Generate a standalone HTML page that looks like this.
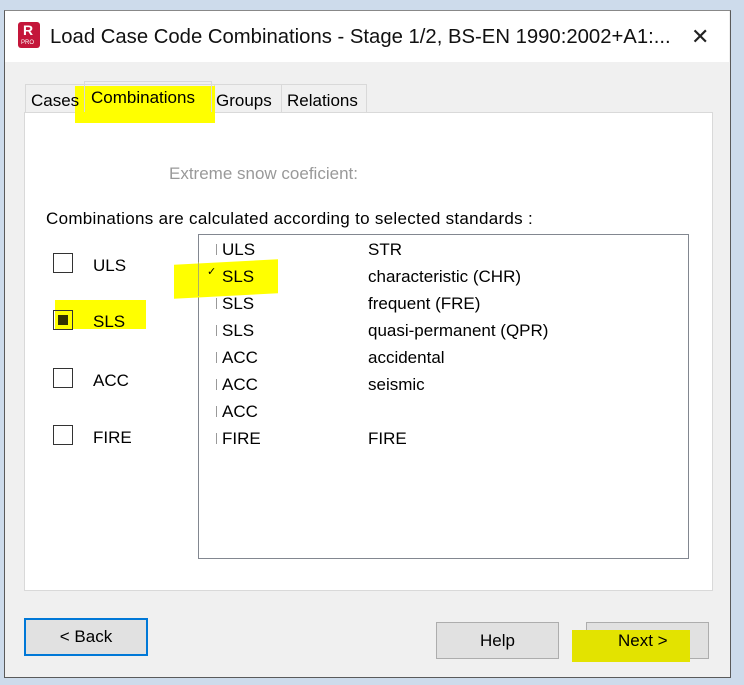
<!DOCTYPE html>
<html><head><style>
body{margin:0;width:744px;height:685px;background:#cddbeb;position:relative;overflow:hidden;font-family:"Liberation Sans",sans-serif;}
.a{position:absolute;}
.win{left:4px;top:10px;width:725px;height:666px;background:#f0f0f0;border:1px solid #5a5a5a;border-top-color:#888;}
.t{font-size:17px;color:#000;white-space:nowrap;}
.cb{width:18px;height:18px;border:1px solid #333;background:#fff;}
.btn{border:1px solid #adadad;background:#e1e1e1;font-size:17px;text-align:center;}
.tick{width:1px;height:11px;background:#999;}
</style></head><body>
<div class="a win"></div>
<div class="a" style="left:5px;top:11px;width:724px;height:51px;background:#fff"></div>
<div class="a" style="left:18px;top:22px;width:22px;height:26px;background:#c4163a;border-radius:3px"></div>
<div class="a" style="left:23px;top:22px;color:#fff;font-weight:bold;font-size:14px">R</div>
<div class="a" style="left:21px;top:40px;color:#fff;font-size:6px">PRO</div>
<div class="a t" style="left:50px;top:26px;font-size:20.3px;color:#111">Load Case Code Combinations - Stage 1/2, BS-EN 1990:2002+A1:...</div>
<div class="a" style="left:691px;top:24px;font-size:22px;color:#222">✕</div>
<!-- tabs -->
<div class="a" style="left:25px;top:84px;width:340px;height:29px;background:#f0f0f0;border:1px solid #d9d9d9;border-bottom:none"></div>
<div class="a" style="left:214px;top:84px;width:1px;height:28px;background:#d9d9d9"></div>
<div class="a" style="left:281px;top:84px;width:1px;height:28px;background:#d9d9d9"></div>
<div class="a" style="left:24px;top:112px;width:687px;height:477px;background:#fff;border:1px solid #d9d9d9"></div>
<div class="a" style="left:75px;top:86px;width:140px;height:37px;background:#ffff00"></div>
<div class="a" style="left:84px;top:81px;width:126px;height:30px;border:1px solid #d9d9d9;border-bottom:none"></div>
<div class="a t" style="left:31px;top:91px">Cases</div>
<div class="a t" style="left:91px;top:88px">Combinations</div>
<div class="a t" style="left:216px;top:91px">Groups</div>
<div class="a t" style="left:287px;top:91px">Relations</div>
<div class="a t" style="left:169px;top:164px;color:#999">Extreme snow coeficient:</div>
<div class="a t" style="left:46px;top:209px;letter-spacing:0.3px">Combinations are calculated according to selected standards :</div>
<!-- left checkboxes -->
<div class="a" style="left:55px;top:300px;width:91px;height:29px;background:#ffff00"></div>
<div class="a cb" style="left:53px;top:253px"></div><div class="a t" style="left:93px;top:256px">ULS</div>
<div class="a cb" style="left:53px;top:310px;background:transparent"></div><div class="a" style="left:58px;top:315px;width:10px;height:10px;background:#333300"></div><div class="a t" style="left:93px;top:312px">SLS</div>
<div class="a cb" style="left:53px;top:368px"></div><div class="a t" style="left:93px;top:371px">ACC</div>
<div class="a cb" style="left:53px;top:425px"></div><div class="a t" style="left:93px;top:428px">FIRE</div>
<!-- list -->
<div class="a" style="left:198px;top:234px;width:489px;height:323px;border:1px solid #828790;background:#fff"></div>
<div class="a" style="left:174px;top:262px;width:104px;height:34px;background:#ffff00;transform:skewY(-3deg)"></div>
<div class="a" style="left:198px;top:262px;width:1px;height:34px;background:#b0b060"></div>
<div class="a t" style="left:207px;top:265px;font-size:11px">✓</div>
<div class="a tick" style="left:216px;top:244px"></div><div class="a t" style="left:222px;top:240px">ULS</div><div class="a t" style="left:368px;top:240px">STR</div>
<div class="a t" style="left:222px;top:267px">SLS</div><div class="a t" style="left:368px;top:267px">characteristic (CHR)</div>
<div class="a tick" style="left:216px;top:298px"></div><div class="a t" style="left:222px;top:294px">SLS</div><div class="a t" style="left:368px;top:294px">frequent (FRE)</div>
<div class="a tick" style="left:216px;top:325px"></div><div class="a t" style="left:222px;top:321px">SLS</div><div class="a t" style="left:368px;top:321px">quasi-permanent (QPR)</div>
<div class="a tick" style="left:216px;top:352px"></div><div class="a t" style="left:222px;top:348px">ACC</div><div class="a t" style="left:368px;top:348px">accidental</div>
<div class="a tick" style="left:216px;top:379px"></div><div class="a t" style="left:222px;top:375px">ACC</div><div class="a t" style="left:368px;top:375px">seismic</div>
<div class="a tick" style="left:216px;top:406px"></div><div class="a t" style="left:222px;top:402px">ACC</div>
<div class="a tick" style="left:216px;top:433px"></div><div class="a t" style="left:222px;top:429px">FIRE</div><div class="a t" style="left:368px;top:429px">FIRE</div>
<!-- buttons -->
<div class="a btn" style="left:24px;top:618px;width:120px;height:34px;line-height:34px;border:2px solid #0078d7">&lt; Back</div>
<div class="a btn" style="left:436px;top:622px;width:121px;height:35px;line-height:36px">Help</div>
<div class="a btn" style="left:586px;top:622px;width:121px;height:35px;line-height:36px"></div>
<div class="a" style="left:572px;top:630px;width:118px;height:32px;background:#e3e300"></div>
<div class="a t" style="left:618px;top:631px">Next &gt;</div>
</body></html>
